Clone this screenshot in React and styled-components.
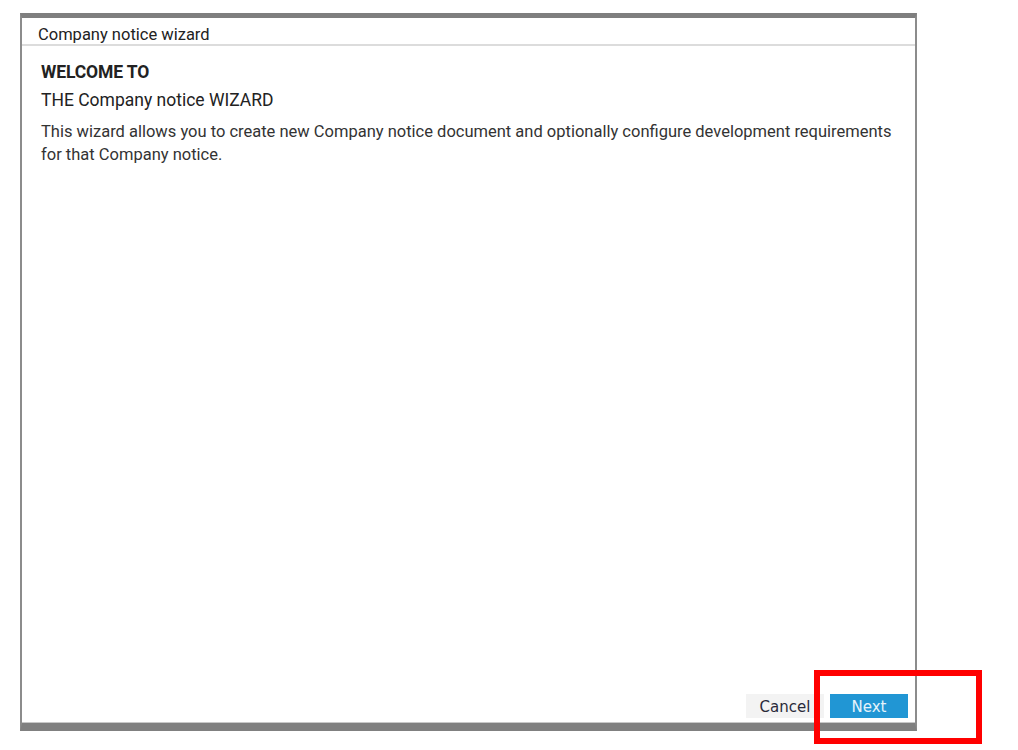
import React from 'react';
import styled, { createGlobalStyle } from 'styled-components';

const GlobalStyle = createGlobalStyle`
    html, body {
        margin: 0;
        padding: 0;
        background: #ffffff;
    }
    body {
        font-family: Roboto, "Liberation Sans", Arial, sans-serif;
        color: #222;
    }
`;

const Page = styled.div`
    position: relative;
    width: 1018px;
    height: 750px;
    padding: 13px 0 0 20px;
    box-sizing: border-box;
`;

const Dialog = styled.div`
    width: 897px;
    height: 718px;
    box-sizing: border-box;
    display: flex;
    flex-direction: column;
    background: #ffffff;
    border-top: 5px solid #7f7f7f;
    border-left: 2px solid #8c8c8c;
    border-right: 2px solid #8c8c8c;
    border-bottom: 8px solid #808080;
    box-shadow: inset 0 -1px 0 #c8c8c8;
`;

const Header = styled.div`
    height: 28px;
    flex-shrink: 0;
    display: flex;
    align-items: center;
    padding: 6px 0 0 16px;
    box-sizing: border-box;
    font-size: 16.5px;
    color: #222;
    border-bottom: 2px solid #dcdcdc;
`;

const Body = styled.div`
    flex: 1;
    padding: 15px 20px 0 19px;
`;

const Heading = styled.div`
    font-size: 17.5px;
    line-height: 22px;
    font-weight: ${p => (p.$bold ? 700 : 400)};
    letter-spacing: ${p => (p.$bold ? '-0.1px' : '0')};
    margin-bottom: ${p => p.$gap}px;
    color: #222;
`;

const Intro = styled.p`
    margin: 0;
    font-size: 16.5px;
    line-height: 23px;
    color: #333;
`;

const Footer = styled.div`
    display: flex;
    justify-content: flex-end;
    gap: 6px;
    padding: 0 7px 5px 0;
`;

const Button = styled.button`
    width: 78px;
    height: 24px;
    padding: 2px 0 0;
    border: none;
    font-family: Tahoma, "DejaVu Sans", Verdana, sans-serif;
    font-size: 15px;
    line-height: 20px;
    background: ${p => (p.$primary ? '#2196d4' : '#f3f3f3')};
    color: ${p => (p.$primary ? '#e6f3fb' : '#2a2a3a')};
    text-align: center;
    cursor: pointer;
`;

const Highlight = styled.div`
    position: absolute;
    left: 814px;
    top: 670px;
    width: 168px;
    height: 74px;
    box-sizing: border-box;
    border: 6px solid #ff0000;
    pointer-events: none;
`;

const App = () => (
    <>
        <GlobalStyle />
        <Page>
            <Dialog>
                <Header>Company notice wizard</Header>
                <Body>
                    <Heading $bold $gap={6}>WELCOME TO</Heading>
                    <Heading $gap={9}>THE Company notice WIZARD</Heading>
                    <Intro>
                        This wizard allows you to create new Company notice document and optionally configure development requirements
                        for that Company notice.
                    </Intro>
                </Body>
                <Footer>
                    <Button>Cancel</Button>
                    <Button $primary>Next</Button>
                </Footer>
            </Dialog>
            <Highlight />
        </Page>
    </>
);

export default App;
